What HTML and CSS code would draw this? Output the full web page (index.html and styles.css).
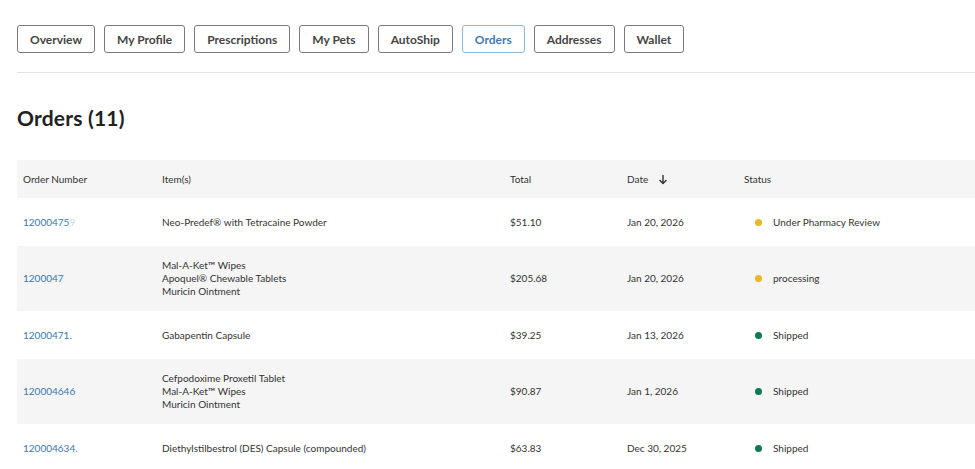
FILE: index.html
```html
<!DOCTYPE html>
<html lang="en">
<head>
<meta charset="utf-8">
<title>Orders</title>
<link rel="stylesheet" href="styles.css">
</head>
<body>
<div class="page">
  <nav class="tabs">
    <a class="tab">Overview</a>
    <a class="tab">My Profile</a>
    <a class="tab">Prescriptions</a>
    <a class="tab">My Pets</a>
    <a class="tab">AutoShip</a>
    <a class="tab active">Orders</a>
    <a class="tab">Addresses</a>
    <a class="tab">Wallet</a>
  </nav>
  <hr class="divider">
  <h1 class="title">Orders (11)</h1>
  <div class="table">
    <div class="row head">
      <div class="cell">Order Number</div>
      <div class="cell">Item(s)</div>
      <div class="cell">Total</div>
      <div class="cell">Date <svg class="arrow" width="10" height="11" viewBox="0 0 10 11"><path d="M5 1v8.5M1.5 6L5 9.5 8.5 6" fill="none" stroke="#333" stroke-width="1.4"/></svg></div>
      <div class="cell">Status</div>
    </div>
    <div class="row">
      <div class="cell"><a class="num">12000475<span class="cut">9</span></a></div>
      <div class="cell items"><span>Neo-Predef® with Tetracaine Powder</span></div>
      <div class="cell">$51.10</div>
      <div class="cell">Jan 20, 2026</div>
      <div class="cell status"><i class="dot pending"></i>Under Pharmacy Review</div>
    </div>
    <div class="row alt">
      <div class="cell"><a class="num">1200047</a></div>
      <div class="cell items"><span>Mal-A-Ket™ Wipes</span><span>Apoquel® Chewable Tablets</span><span>Muricin Ointment</span></div>
      <div class="cell">$205.68</div>
      <div class="cell">Jan 20, 2026</div>
      <div class="cell status"><i class="dot pending"></i>processing</div>
    </div>
    <div class="row">
      <div class="cell"><a class="num">12000471.</a></div>
      <div class="cell items"><span>Gabapentin Capsule</span></div>
      <div class="cell">$39.25</div>
      <div class="cell">Jan 13, 2026</div>
      <div class="cell status"><i class="dot shipped"></i>Shipped</div>
    </div>
    <div class="row alt">
      <div class="cell"><a class="num">120004646</a></div>
      <div class="cell items"><span>Cefpodoxime Proxetil Tablet</span><span>Mal-A-Ket™ Wipes</span><span>Muricin Ointment</span></div>
      <div class="cell">$90.87</div>
      <div class="cell">Jan 1, 2026</div>
      <div class="cell status"><i class="dot shipped"></i>Shipped</div>
    </div>
    <div class="row">
      <div class="cell"><a class="num">120004634.</a></div>
      <div class="cell items"><span>Diethylstilbestrol (DES) Capsule (compounded)</span></div>
      <div class="cell">$63.83</div>
      <div class="cell">Dec 30, 2025</div>
      <div class="cell status"><i class="dot shipped"></i>Shipped</div>
    </div>
  </div>
</div>
</body>
</html>
```
FILE: styles.css
```css
* { box-sizing: border-box; }
html, body { margin: 0; padding: 0; background: #fff; }
body {
  font-family: "Lato", "Open Sans", "Liberation Sans", sans-serif;
  color: #333;
  overflow: hidden;
}
.page { padding: 25px 0 0 17px; }
.tabs { display: flex; gap: 9px; }
.tab {
  display: flex;
  align-items: center;
  justify-content: center;
  height: 28px;
  padding: 0 12px;
  border: 1px solid #7a7a7a;
  border-radius: 3px;
  font-size: 12px;
  font-weight: 700;
  color: #444;
  background: #fff;
}
.tab.active { border-color: #8db8d6; color: #3b7bb3; }
.divider {
  margin: 19px 0 0;
  border: 0;
  border-top: 1px solid #e3e3e3;
}
.title {
  margin: 31px 0 0;
  font-size: 21px;
  font-weight: 700;
  color: #222;
  line-height: 28px;
  letter-spacing: 0.2px;
}
.table { margin-top: 28px; font-size: 10px; color: #333; }
.row {
  display: grid;
  grid-template-columns: 139px 348px 117px 117px 1fr;
  align-items: center;
  min-height: 48px;
  padding: 13px 0;
}
.row.head { min-height: 38px; padding: 0; background: #f5f5f5; }
.row.alt { background: #f5f5f5; min-height: 65px; }
.cell { padding-left: 6px; line-height: 13px; display: flex; align-items: center; }
.items { flex-direction: column; align-items: flex-start; }
.arrow { margin-left: 10px; }
.num { color: #3a78b0; }
.cut { color: #c8d8e8; }
.status { padding-left: 17px; }
.dot {
  width: 7px;
  height: 7px;
  border-radius: 50%;
  margin-right: 11px;
  display: inline-block;
}
.dot.pending { background: #f0b429; }
.dot.shipped { background: #0b7a52; }
```
